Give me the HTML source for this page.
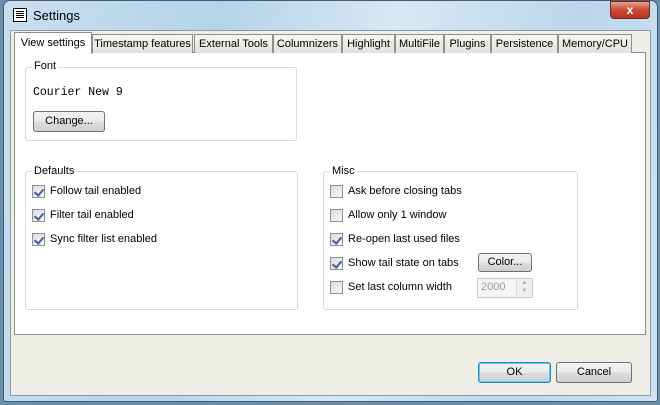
<html><head><style>
*{margin:0;padding:0;box-sizing:border-box}
body{width:660px;height:405px;overflow:hidden;font-family:"Liberation Sans",sans-serif;font-size:11px;color:#000;position:relative;background:#6a8fa8}
.a{position:absolute}
.frame{left:3px;top:0;width:655px;height:402px;border:1px solid #4a5a6a;border-radius:7px 7px 3px 3px;background:linear-gradient(100deg,#c8dff0 0%,#b6d3ea 30%,#d6e8f4 55%,#bcd6ec 80%,#cfe3f2 100%)}
.dlg{left:10px;top:30px;width:641px;height:366px;background:#eeede6;border:1px solid #8a9aa8}
.panel{left:14px;top:52px;width:632px;height:283px;background:#fff;border:1px solid #8b8b8b}
.tab{top:34px;height:19px;border:1px solid #8e8e8e;border-bottom:none;background:linear-gradient(#f6f6f4,#e2e1da);text-align:center;line-height:18px;font-size:11px}
.grp{border:1px solid #d5dadd;border-radius:3px}
.lg{background:#fff;padding:0 2px;font-size:11px}
.cb{width:13px;height:13px;border:1px solid #8e8f8f;background:linear-gradient(135deg,#dcdcdc,#f7f7f7)}
.cb.c::after{content:"";position:absolute;left:3px;top:1px;width:4px;height:7px;border:solid #3a5ea8;border-width:0 2px 2px 0;transform:rotate(40deg)}
.lb{font-size:11px}
.btn{border:1px solid #707070;border-radius:3px;background:linear-gradient(#f2f2f2 0%,#ebebeb 50%,#dddddd 51%,#cfcfcf 100%);text-align:center;font-size:11px}
</style></head><body>
<div class="a frame"></div>
<div class="a" style="left:13px;top:8px;width:14px;height:14px;border:1px solid #000;background:#fff"></div>
<div class="a" style="left:16px;top:11px;width:8px;height:1px;background:#000;box-shadow:0 2px #000,0 4px #000,0 6px #000"></div>
<div class="a" style="left:33px;top:8px;font-size:13px">Settings</div>
<div class="a" style="left:610px;top:1px;width:40px;height:18px;border:1px solid #6a2a22;border-radius:0 0 4px 4px;background:linear-gradient(#e8a090,#c84a36 50%,#b83220);color:#fff;text-align:center;font-weight:bold;font-size:12px;line-height:16px">x</div>
<div class="a dlg"></div>
<div class="a panel"></div>
<div class="a tab" style="left:92px;width:101px">Timestamp features</div>
<div class="a tab" style="left:194px;width:79px">External Tools</div>
<div class="a tab" style="left:273px;width:69px">Columnizers</div>
<div class="a tab" style="left:342px;width:53px">Highlight</div>
<div class="a tab" style="left:395px;width:49px">MultiFile</div>
<div class="a tab" style="left:444px;width:47px">Plugins</div>
<div class="a tab" style="left:491px;width:67px">Persistence</div>
<div class="a tab" style="left:558px;width:74px">Memory/CPU</div>
<div class="a tab" style="left:14px;top:32px;width:78px;height:22px;background:#fff;line-height:20px">View settings</div>

<div class="a grp" style="left:25px;top:67px;width:272px;height:74px"></div>
<div class="a lg" style="left:32px;top:60px">Font</div>
<div class="a" style="left:33px;top:86px;font-family:'Liberation Mono',monospace;font-size:11.5px">Courier New 9</div>
<div class="a btn" style="left:33px;top:111px;width:72px;height:21px;line-height:19px">Change...</div>

<div class="a grp" style="left:25px;top:171px;width:273px;height:139px"></div>
<div class="a lg" style="left:32px;top:165px">Defaults</div>
<div class="a cb c" style="left:32px;top:185px"></div><div class="a lb" style="left:50px;top:185px">Follow tail enabled</div>
<div class="a cb c" style="left:32px;top:209px"></div><div class="a lb" style="left:50px;top:209px">Filter tail enabled</div>
<div class="a cb c" style="left:32px;top:233px"></div><div class="a lb" style="left:50px;top:233px">Sync filter list enabled</div>

<div class="a grp" style="left:323px;top:171px;width:255px;height:139px"></div>
<div class="a lg" style="left:330px;top:165px">Misc</div>
<div class="a cb" style="left:330px;top:185px"></div><div class="a lb" style="left:348px;top:185px">Ask before closing tabs</div>
<div class="a cb" style="left:330px;top:209px"></div><div class="a lb" style="left:348px;top:209px">Allow only 1 window</div>
<div class="a cb c" style="left:330px;top:233px"></div><div class="a lb" style="left:348px;top:233px">Re-open last used files</div>
<div class="a cb c" style="left:330px;top:257px"></div><div class="a lb" style="left:348px;top:257px">Show tail state on tabs</div>
<div class="a cb" style="left:330px;top:281px"></div><div class="a lb" style="left:348px;top:281px">Set last column width</div>
<div class="a btn" style="left:478px;top:253px;width:54px;height:19px;line-height:17px">Color...</div>
<div class="a" style="left:477px;top:278px;width:56px;height:20px;border:1px solid #c9c9c9;background:#f4f4f4;color:#9a9a9a;padding:2px 0 0 3px">2000</div>
<div class="a" style="left:516px;top:279px;width:16px;height:18px;border-left:1px solid #ddd;background:#eee;color:#aaa;font-size:6px;text-align:center;line-height:8px">▲<br>▼</div>

<div class="a btn" style="left:478px;top:362px;width:73px;height:21px;line-height:19px;border-color:#3c7fb1;box-shadow:inset 0 0 0 1px #48d2f8">OK</div>
<div class="a btn" style="left:556px;top:362px;width:76px;height:21px;line-height:19px">Cancel</div>
</body></html>
